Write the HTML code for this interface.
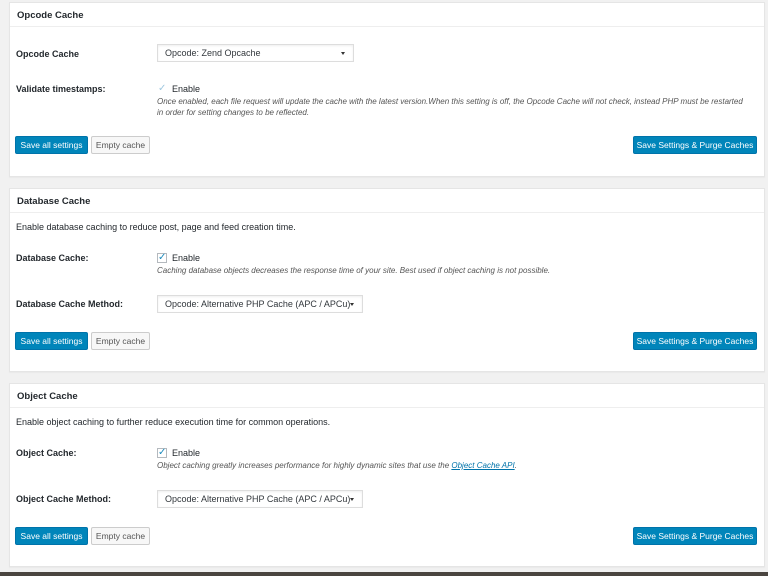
<!DOCTYPE html><html><head><style>
body{margin:0;width:768px;height:576px;background:#f1f1f1;font-family:"Liberation Sans",sans-serif;font-size:9px;color:#23282d;position:relative;overflow:hidden}
.a{position:absolute;white-space:nowrap}
.p{position:absolute;left:9px;width:754px;background:#fff;border:1px solid #e5e5e5;box-shadow:0 1px 1px rgba(0,0,0,.04)}
.h{position:absolute;left:0;right:0;top:0;height:23px;border-bottom:1px solid #eee}
.t{font-weight:bold;font-size:9.5px}
.l{font-weight:bold}
.sel{position:absolute;border:1px solid #ddd;box-shadow:inset 0 1px 2px rgba(0,0,0,.07);background:#fff;height:18px;line-height:17px;padding-left:7px;box-sizing:border-box;color:#32373c;font-size:9px}
.sel:after{content:"";position:absolute;right:8px;top:7px;border:2px solid transparent;border-top:3px solid #333;border-bottom:0}
.b{position:absolute;height:18px;line-height:17px;box-sizing:border-box;border:1px solid #0073aa;background:#0085ba;color:#fff;text-align:center;border-radius:2px;font-size:8.5px}
.g{border-color:#ccc;background:#f7f7f7;color:#555}
.cb{position:absolute;width:10px;height:10px;border:1px solid #b4b9be;background:#fff;box-sizing:border-box}
.ck{position:absolute;color:#1e8cbe;font-size:10px;line-height:10px}
i{font-style:italic;color:#555;font-size:8px}
a{color:#0073aa}
</style></head><body>
<div class="p" style="top:2px;height:173px"><div class="h"></div></div>
<div class="p" style="top:188px;height:182px"><div class="h"></div></div>
<div class="p" style="top:383px;height:182px"><div class="h"></div></div>
<div style="position:absolute;left:0;top:572px;width:768px;height:4px;background:#4a4540"></div>

<div class="a t" style="left:17px;top:10px">Opcode Cache</div>
<div class="a l" style="left:16px;top:49px">Opcode Cache</div>
<div class="sel" style="left:157px;top:44px;width:197px">Opcode: Zend Opcache</div>
<div class="a l" style="left:16px;top:84px">Validate timestamps:</div>
<div class="ck" style="left:158px;top:84px;color:#a0c8e0">✓</div>
<div class="a" style="left:172px;top:84px">Enable</div>
<div class="a" style="left:157px;top:96px"><i>Once enabled, each file request will update the cache with the latest version.When this setting is off, the Opcode Cache will not check, instead PHP must be restarted</i></div>
<div class="a" style="left:157px;top:107px"><i>in order for setting changes to be reflected.</i></div>
<div class="b" style="left:15px;top:136px;width:73px">Save all settings</div>
<div class="b g" style="left:91px;top:136px;width:59px">Empty cache</div>
<div class="b" style="left:633px;top:136px;width:124px">Save Settings &amp; Purge Caches</div>

<div class="a t" style="left:17px;top:196px">Database Cache</div>
<div class="a" style="left:16px;top:222px">Enable database caching to reduce post, page and feed creation time.</div>
<div class="a l" style="left:16px;top:253px">Database Cache:</div>
<div class="cb" style="left:157px;top:253px"></div><div class="ck" style="left:158px;top:253px">✓</div>
<div class="a" style="left:172px;top:253px">Enable</div>
<div class="a" style="left:157px;top:265px"><i>Caching database objects decreases the response time of your site. Best used if object caching is not possible.</i></div>
<div class="a l" style="left:16px;top:299px">Database Cache Method:</div>
<div class="sel" style="left:157px;top:295px;width:206px">Opcode: Alternative PHP Cache (APC / APCu)</div>
<div class="b" style="left:15px;top:332px;width:73px">Save all settings</div>
<div class="b g" style="left:91px;top:332px;width:59px">Empty cache</div>
<div class="b" style="left:633px;top:332px;width:124px">Save Settings &amp; Purge Caches</div>

<div class="a t" style="left:17px;top:391px">Object Cache</div>
<div class="a" style="left:16px;top:417px">Enable object caching to further reduce execution time for common operations.</div>
<div class="a l" style="left:16px;top:448px">Object Cache:</div>
<div class="cb" style="left:157px;top:448px"></div><div class="ck" style="left:158px;top:448px">✓</div>
<div class="a" style="left:172px;top:448px">Enable</div>
<div class="a" style="left:157px;top:460px"><i>Object caching greatly increases performance for highly dynamic sites that use the <a href="#">Object Cache API</a>.</i></div>
<div class="a l" style="left:16px;top:494px">Object Cache Method:</div>
<div class="sel" style="left:157px;top:490px;width:206px">Opcode: Alternative PHP Cache (APC / APCu)</div>
<div class="b" style="left:15px;top:527px;width:73px">Save all settings</div>
<div class="b g" style="left:91px;top:527px;width:59px">Empty cache</div>
<div class="b" style="left:633px;top:527px;width:124px">Save Settings &amp; Purge Caches</div>
</body></html>
